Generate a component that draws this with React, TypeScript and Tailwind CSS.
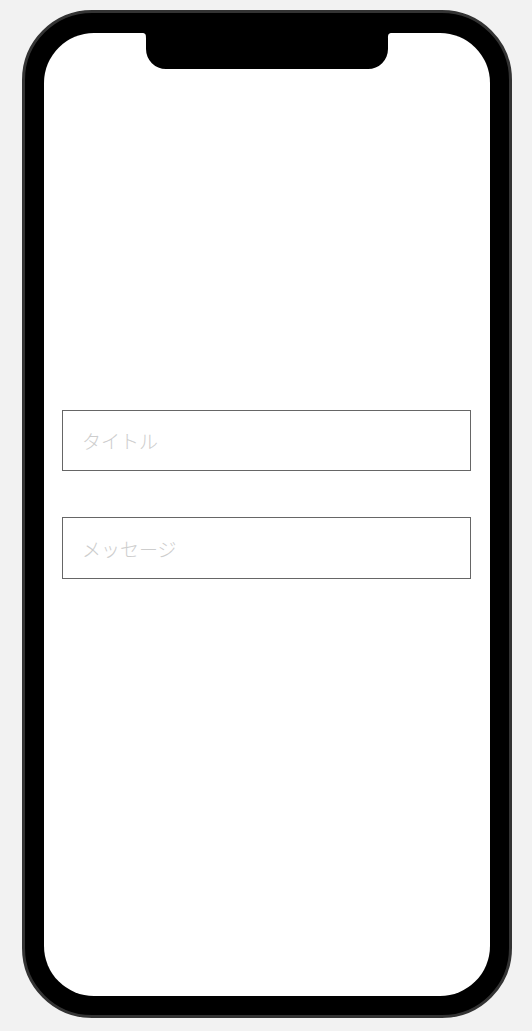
export default function App() {
  return (
    <div className="min-h-screen bg-[#f2f2f2] pt-[10px] pl-[22px]">
      <div className="w-[490px] h-[1008px] rounded-[70px] border-[3px] border-[#333] bg-black pt-[20px] pb-[19px] px-[19px]">
        <div className="relative h-full w-full rounded-[50px] bg-white overflow-hidden">
          {/* notch */}
          <svg
            className="absolute top-0 left-[98px]"
            width="250"
            height="36"
            viewBox="0 0 250 36"
          >
            <path
              d="M0 0 H250 C246 0 246 2 246 6 V16 A20 20 0 0 1 226 36 H24 A20 20 0 0 1 4 16 V6 C4 2 4 0 0 0 Z"
              fill="#000"
            />
          </svg>

          <div className="flex flex-col gap-[46px] pl-[18px] pr-[19px] pt-[377px]">
            <input
              type="text"
              placeholder="タイトル"
              className="h-[61px] w-full border border-[#666] bg-white px-[19px] text-[19px] text-[#333] outline-none placeholder:text-[#cdcdcd] font-['Noto_Sans_CJK_JP',sans-serif] font-light"
            />
            <input
              type="text"
              placeholder="メッセージ"
              className="h-[62px] w-full border border-[#666] bg-white px-[19px] text-[19px] text-[#333] outline-none placeholder:text-[#cdcdcd] font-['Noto_Sans_CJK_JP',sans-serif] font-light"
            />
          </div>
        </div>
      </div>
    </div>
  );
}
